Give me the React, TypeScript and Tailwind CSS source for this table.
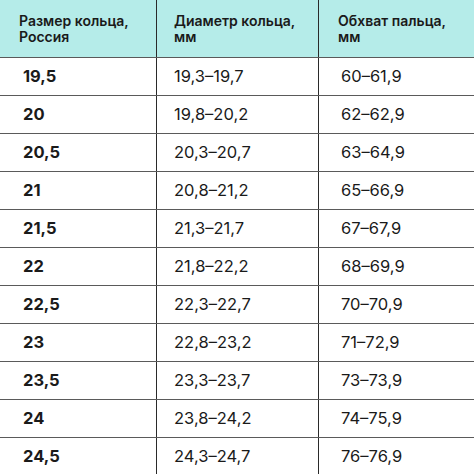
import React from "react";

const rows: [string, string, string][] = [
  ["19,5", "19,3–19,7", "60–61,9"],
  ["20", "19,8–20,2", "62–62,9"],
  ["20,5", "20,3–20,7", "63–64,9"],
  ["21", "20,8–21,2", "65–66,9"],
  ["21,5", "21,3–21,7", "67–67,9"],
  ["22", "21,8–22,2", "68–69,9"],
  ["22,5", "22,3–22,7", "70–70,9"],
  ["23", "22,8–23,2", "71–72,9"],
  ["23,5", "23,3–23,7", "73–73,9"],
  ["24", "23,8–24,2", "74–75,9"],
  ["24,5", "24,3–24,7", "76–76,9"],
];

export default function App() {
  return (
    <div
      className="w-[474px] h-[474px] overflow-hidden bg-white text-[#1a1a1a]"
      style={{ fontFamily: "Inter, 'Noto Sans', sans-serif" }}
    >
      <div className="grid grid-cols-[157px_162px_1fr] h-[57px] bg-[#b5ece9] text-[14px] font-semibold leading-[16px]">
        <div className="border-r-[1.5px] border-[#2a2a2a] pl-[19px] flex flex-col justify-center">
          <span>Размер кольца,</span>
          <span>Россия</span>
        </div>
        <div className="border-r-[1.5px] border-[#2a2a2a] pl-[17px] flex flex-col justify-center">
          <span>Диаметр кольца,</span>
          <span>мм</span>
        </div>
        <div className="pl-[19px] flex flex-col justify-center">
          <span>Обхват пальца,</span>
          <span>мм</span>
        </div>
      </div>
      {rows.map((r) => (
        <div
          key={r[0]}
          className="grid grid-cols-[157px_162px_1fr] h-[38px] border-t-[1.5px] border-[#5a5a5a]"
        >
          <div className="border-r-[1.5px] border-[#2a2a2a] pl-[23px] flex items-center text-[16.5px] font-bold">
            {r[0]}
          </div>
          <div className="border-r-[1.5px] border-[#2a2a2a] pl-[17px] flex items-center text-[16.5px]">
            {r[1]}
          </div>
          <div className="pl-[22px] flex items-center text-[16.5px]">{r[2]}</div>
        </div>
      ))}
    </div>
  );
}
